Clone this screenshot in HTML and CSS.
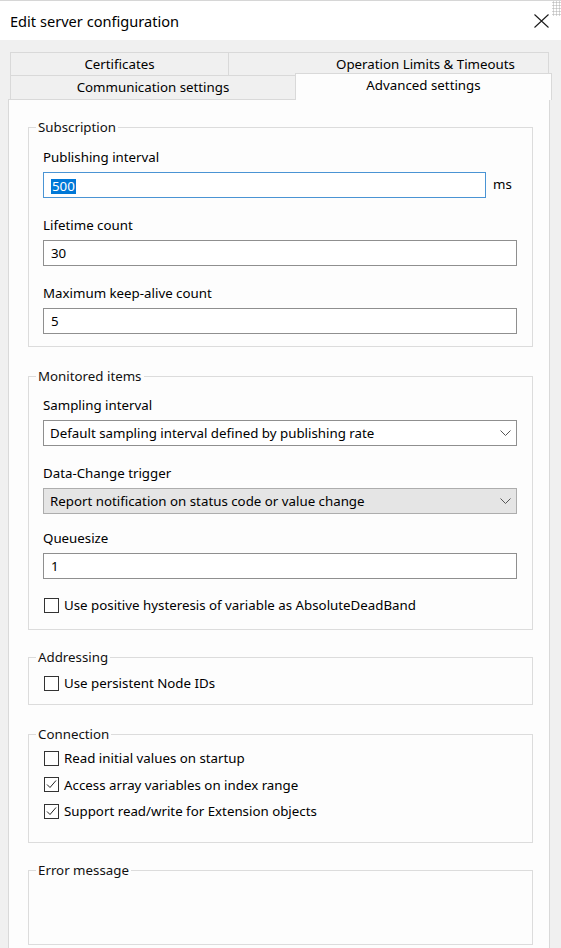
FILE: index.html
```html
<!DOCTYPE html>
<html lang="en">
<head>
  <meta charset="UTF-8">
  <title>Edit server configuration</title>
  <link rel="stylesheet" href="styles.css">
</head>
<body>
  <div class="titlebar">
    <span class="title">Edit server configuration</span>
    <svg class="close" width="15" height="14" viewBox="0 0 15 14">
      <path d="M0.5 0.5 L14.5 13.5 M14.5 0.5 L0.5 13.5" stroke="#1a1a1a" stroke-width="1.1" fill="none"/>
    </svg>
    <div class="grip"></div>
  </div>

  <div class="tabs">
    <div class="tabrow back">
      <div class="tab t-cert">Certificates</div>
      <div class="tab t-limits">Operation Limits &amp; Timeouts</div>
    </div>
    <div class="tabrow front">
      <div class="tab t-comm">Communication settings</div>
      <div class="tab t-adv active">Advanced settings</div>
    </div>
  </div>

  <div class="panel">
    <fieldset class="group g-sub">
      <legend>Subscription</legend>
      <label>Publishing interval</label>
      <div class="row">
        <div class="textbox focused"><span class="selected">500</span></div>
        <span class="unit">ms</span>
      </div>
      <label>Lifetime count</label>
      <div class="textbox">30</div>
      <label>Maximum keep-alive count</label>
      <div class="textbox">5</div>
    </fieldset>

    <fieldset class="group g-mon">
      <legend>Monitored items</legend>
      <label>Sampling interval</label>
      <div class="combo">
        <span>Default sampling interval defined by publishing rate</span>
        <svg width="11" height="6" viewBox="0 0 11 6"><polyline points="0.5,0.5 5.5,5.5 10.5,0.5" stroke="#555" fill="none"/></svg>
      </div>
      <label>Data-Change trigger</label>
      <div class="combo locked">
        <span>Report notification on status code or value change</span>
        <svg width="11" height="6" viewBox="0 0 11 6"><polyline points="0.5,0.5 5.5,5.5 10.5,0.5" stroke="#555" fill="none"/></svg>
      </div>
      <label class="lbl-queue">Queuesize</label>
      <div class="textbox">1</div>
      <div class="check check-hyst"><span class="box"></span>Use positive hysteresis of variable as AbsoluteDeadBand</div>
    </fieldset>

    <fieldset class="group g-addr">
      <legend>Addressing</legend>
      <div class="check"><span class="box"></span>Use persistent Node IDs</div>
    </fieldset>

    <fieldset class="group g-conn">
      <legend>Connection</legend>
      <div class="check"><span class="box"></span>Read initial values on startup</div>
      <div class="check"><span class="box"><svg width="13" height="13" viewBox="0 0 13 13"><polyline points="2,6.5 5,9.5 11,2.5" stroke="#222" fill="none"/></svg></span>Access array variables on index range</div>
      <div class="check"><span class="box"><svg width="13" height="13" viewBox="0 0 13 13"><polyline points="2,6.5 5,9.5 11,2.5" stroke="#222" fill="none"/></svg></span>Support read/write for Extension objects</div>
    </fieldset>

    <fieldset class="group g-err">
      <legend>Error message</legend>
    </fieldset>
  </div>
</body>
</html>
```

FILE: styles.css
```css
* { box-sizing: border-box; }
html, body { margin: 0; height: 100%; }
body { font-family: "Noto Sans", "Open Sans", sans-serif; font-size: 13.3px; color: #000; background: #f0f0f0; overflow: hidden; }

/* window caption */
.titlebar { position: relative; display: flex; align-items: center; height: 40px; padding: 0 12px 0 10px; background: #fff; border-top: 1px solid #d6d6d6; }
.title { font-size: 14.6px; }
.close { margin-left: auto; }
.grip { position: absolute; top: 0; right: 0; width: 9px; height: 15px; background-image: radial-gradient(#c2c2c2 0.9px, transparent 1.2px); background-size: 3px 3px; }

/* two rows of tabs */
.tabs { padding: 12px 0 0 10px; }
.tabrow { display: flex; }
.tab { height: 23px; line-height: 23px; text-align: center; white-space: nowrap; border: 1px solid #d9d9d9; border-bottom: none; background: #f0f0f0; }
.t-cert { width: 219px; }
.t-limits { width: 321px; margin-left: -1px; padding-left: 74px; }
.front { align-items: flex-end; height: 26px; margin-top: -2px; }
.t-comm { width: 286px; height: 24px; }
.t-adv { width: 257px; height: 27px; margin: 0 0 -1px -1px; padding-bottom: 3px; }
.tab.active { position: relative; z-index: 1; background: #fdfdfd; }

.panel { margin: 0 11px 0 8px; padding: 19px 16px 0 19px; border: 1px solid #d9d9d9; background: #fdfdfd; height: 900px; }

/* group boxes */
.group { margin: 0; padding: 14px 15px 12px 14px; border: 1px solid #dcdcdc; min-width: 0; }
.group legend { margin-left: -7px; padding: 0 2px; line-height: 16px; color: #111; }
.group label { display: block; line-height: 16px; }
.textbox + label, .row + label, .combo + label { margin-top: 19px; }

.textbox { height: 26px; margin-top: 7px; padding: 0 7px; line-height: 24px; border: 1px solid #8f8f8f; background: #fff; }
.row { display: flex; align-items: center; margin-top: 7px; }
.row .textbox { width: 443px; margin-top: 0; }
.textbox.focused { border-color: #4a94d4; padding-left: 7px; }
.selected { display: inline-block; line-height: 15px; padding: 0 1px; background: #0078d7; color: #fff; vertical-align: middle; }
.unit { margin-left: 7px; margin-top: -3px; }

.combo { display: flex; align-items: center; justify-content: space-between; height: 26px; margin-top: 7px; padding: 0 5px 0 6px; border: 1px solid #8f8f8f; background: #fff; }
.combo.locked { background: #e5e5e5; border-color: #adadad; }

.lbl-queue { margin-top: 16px !important; }

.check { display: flex; align-items: center; height: 20px; white-space: nowrap; }
.check + .check { margin-top: 6.5px; }
.box { display: flex; width: 15px; height: 15px; margin: 0 5px 0 1px; border: 1px solid #333; background: #fff; }
.check-hyst { margin-top: 16px; }

.g-mon { margin-top: 21px; padding-top: 13px; padding-bottom: 14px; }
.g-addr { margin-top: 19px; padding-top: 8px; padding-bottom: 11px; }
.g-conn { margin-top: 21px; padding-top: 6px; padding-bottom: 21px; }
.g-err { margin-top: 19px; height: 83px; }
```
